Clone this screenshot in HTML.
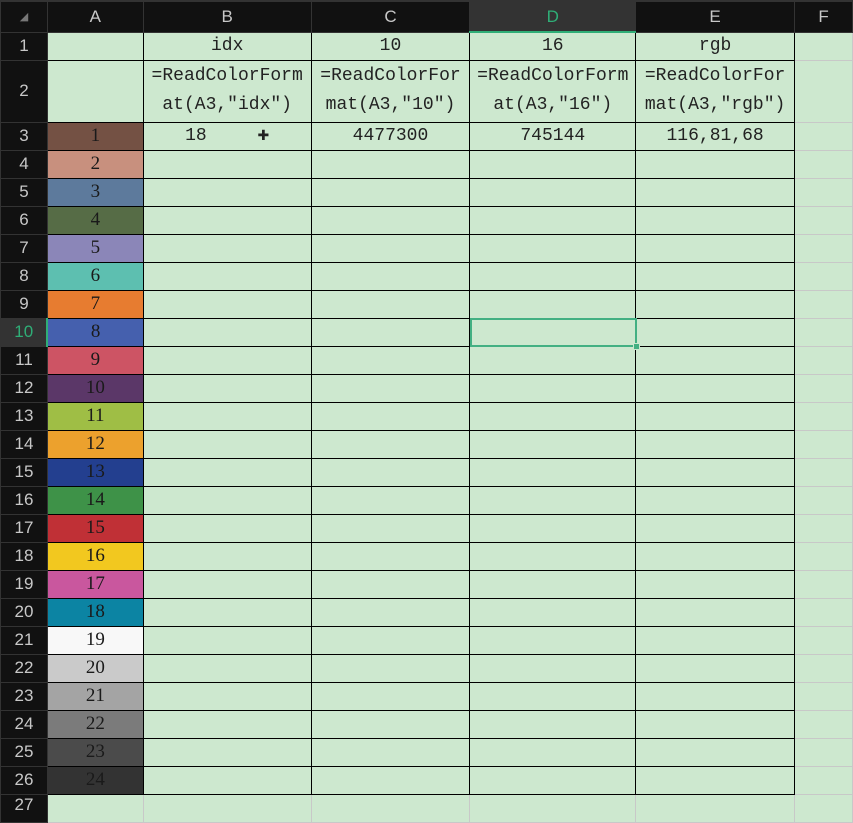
<!DOCTYPE html>
<html><head><meta charset="utf-8"><style>
html,body{margin:0;padding:0;background:#111;width:853px;height:807px;overflow:hidden}
table{border-collapse:collapse;table-layout:fixed;position:absolute;left:0;top:0}
td{padding:0;border:1px solid #000;background:#cde8cf;text-align:center;vertical-align:middle;font-family:"Liberation Mono",monospace;font-size:18px;color:#222;overflow:hidden;white-space:nowrap}
td.h{background:#111;color:#c8c8c8;font-family:"Liberation Sans",sans-serif;font-size:17px;border-color:#333}
tr.top td.h{height:29px;border-top:2px solid #333}
td.a{font-family:"Liberation Serif",serif;font-size:19px;color:#1a1a1a}
td.f{border-color:#c8c8c8}
.sel{position:absolute;left:470px;top:318px;width:163px;height:25px;border:2px solid #43b083}
.sel:after{content:"";position:absolute;right:-5px;bottom:-5px;width:5px;height:5px;background:#43b083;border:1px solid #cde8cf}
.r2{line-height:29px;white-space:normal;word-break:break-all}
</style></head><body>
<table>
<colgroup><col style="width:47px"><col style="width:96px"><col style="width:168px"><col style="width:159px"><col style="width:166px"><col style="width:159px"><col style="width:58px"></colgroup>
<tr class="top"><td class="h" style="color:#777;font-size:11px">◢</td><td class="h">A</td><td class="h">B</td><td class="h">C</td><td class="h" style="background:#333;color:#2fae77;border-bottom:2px solid #2fae77">D</td><td class="h">E</td><td class="h">F</td></tr>
<tr style="height:28px"><td class="h">1</td><td></td><td>idx</td><td>10</td><td>16</td><td>rgb</td><td class="f"></td></tr>
<tr style="height:62px"><td class="h">2</td><td></td><td class="r2">=ReadColorForm<br>at(A3,″idx″)</td><td class="r2">=ReadColorFor<br>mat(A3,″10″)</td><td class="r2">=ReadColorForm<br>at(A3,″16″)</td><td class="r2">=ReadColorFor<br>mat(A3,″rgb″)</td><td class="f"></td></tr>
<tr style="height:28px"><td class="h">3</td><td class="a" style="background:#745144">1</td><td>18 <span style="margin-left:40px;font-size:14px">✚</span></td><td>4477300</td><td>745144</td><td>116,81,68</td><td class="f"></td></tr>
<tr style="height:28px"><td class="h">4</td><td class="a" style="background:#c8907e">2</td><td></td><td></td><td></td><td></td><td class="f"></td></tr>
<tr style="height:28px"><td class="h">5</td><td class="a" style="background:#5d7a9c">3</td><td></td><td></td><td></td><td></td><td class="f"></td></tr>
<tr style="height:28px"><td class="h">6</td><td class="a" style="background:#566c46">4</td><td></td><td></td><td></td><td></td><td class="f"></td></tr>
<tr style="height:28px"><td class="h">7</td><td class="a" style="background:#8b86b8">5</td><td></td><td></td><td></td><td></td><td class="f"></td></tr>
<tr style="height:28px"><td class="h">8</td><td class="a" style="background:#5dbfb0">6</td><td></td><td></td><td></td><td></td><td class="f"></td></tr>
<tr style="height:28px"><td class="h">9</td><td class="a" style="background:#e77c30">7</td><td></td><td></td><td></td><td></td><td class="f"></td></tr>
<tr style="height:28px"><td class="h" style="background:#333;color:#2fae77;border-right:2px solid #2fae77">10</td><td class="a" style="background:#4560ae">8</td><td></td><td></td><td></td><td></td><td class="f"></td></tr>
<tr style="height:28px"><td class="h">11</td><td class="a" style="background:#cd5464">9</td><td></td><td></td><td></td><td></td><td class="f"></td></tr>
<tr style="height:28px"><td class="h">12</td><td class="a" style="background:#5b3768">10</td><td></td><td></td><td></td><td></td><td class="f"></td></tr>
<tr style="height:28px"><td class="h">13</td><td class="a" style="background:#9fbe45">11</td><td></td><td></td><td></td><td></td><td class="f"></td></tr>
<tr style="height:28px"><td class="h">14</td><td class="a" style="background:#eca12d">12</td><td></td><td></td><td></td><td></td><td class="f"></td></tr>
<tr style="height:28px"><td class="h">15</td><td class="a" style="background:#233f8f">13</td><td></td><td></td><td></td><td></td><td class="f"></td></tr>
<tr style="height:28px"><td class="h">16</td><td class="a" style="background:#3e9248">14</td><td></td><td></td><td></td><td></td><td class="f"></td></tr>
<tr style="height:28px"><td class="h">17</td><td class="a" style="background:#c03036">15</td><td></td><td></td><td></td><td></td><td class="f"></td></tr>
<tr style="height:28px"><td class="h">18</td><td class="a" style="background:#f2c81f">16</td><td></td><td></td><td></td><td></td><td class="f"></td></tr>
<tr style="height:28px"><td class="h">19</td><td class="a" style="background:#c9579e">17</td><td></td><td></td><td></td><td></td><td class="f"></td></tr>
<tr style="height:28px"><td class="h">20</td><td class="a" style="background:#0c84a3">18</td><td></td><td></td><td></td><td></td><td class="f"></td></tr>
<tr style="height:28px"><td class="h">21</td><td class="a" style="background:#f8f8f8">19</td><td></td><td></td><td></td><td></td><td class="f"></td></tr>
<tr style="height:28px"><td class="h">22</td><td class="a" style="background:#cacaca">20</td><td></td><td></td><td></td><td></td><td class="f"></td></tr>
<tr style="height:28px"><td class="h">23</td><td class="a" style="background:#a4a4a4">21</td><td></td><td></td><td></td><td></td><td class="f"></td></tr>
<tr style="height:28px"><td class="h">24</td><td class="a" style="background:#7b7b7b">22</td><td></td><td></td><td></td><td></td><td class="f"></td></tr>
<tr style="height:28px"><td class="h">25</td><td class="a" style="background:#4b4b4b">23</td><td></td><td></td><td></td><td></td><td class="f"></td></tr>
<tr style="height:28px"><td class="h">26</td><td class="a" style="background:#333333">24</td><td></td><td></td><td></td><td></td><td class="f"></td></tr>
<tr style="height:28px"><td class="h" style="vertical-align:top">27</td><td class="f"></td><td class="f"></td><td class="f"></td><td class="f"></td><td class="f"></td><td class="f"></td></tr>
</table>
<div class="sel"></div>
</body></html>
